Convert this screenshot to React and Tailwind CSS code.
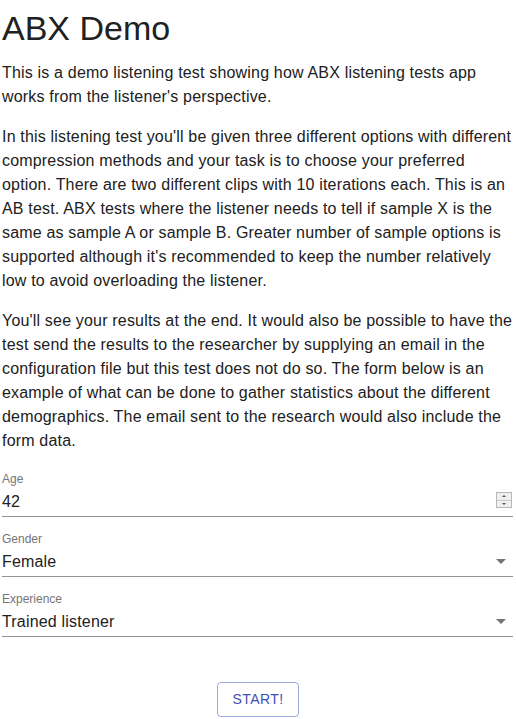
import React, { useState } from 'react';

const Field = ({ label, value, select }) => (
  <div className="relative h-12">
    <div className="h-4 pt-[4px] text-[12px] leading-none text-[#757575]">{label}</div>
    <div className="relative flex h-8 items-center border-b border-[#949494]">
      <span className="pt-[2px] text-base leading-[19px] tracking-[0.18px] text-[#212121]">{value}</span>
      {select ? (
        <svg className="absolute right-0 top-[4px] h-6 w-6 text-[#757575]" viewBox="0 0 24 24" fill="currentColor">
          <path d="M7 10l5 5 5-5z" />
        </svg>
      ) : (
        <div className="absolute right-[1px] top-[7px] flex h-[16px] w-[16px] flex-col border border-[#b8b8b8] bg-[#efefef]">
          <div className="flex flex-1 items-center justify-center border-b border-[#c8c8c8]">
            <span className="h-0 w-0 border-x-[2px] border-b-[2px] border-x-transparent border-b-[#555]" />
          </div>
          <div className="flex flex-1 items-center justify-center">
            <span className="h-0 w-0 border-x-[2px] border-t-[2px] border-x-transparent border-t-[#555]" />
          </div>
        </div>
      )}
    </div>
  </div>
);

const App = () => {
  const [started, setStarted] = useState(false);

  return (
    <div className="min-h-screen bg-white px-[2px] pt-[7px] font-['Liberation_Sans',Arial,sans-serif] text-[#212121]">
      <h4 className="mb-[12px] text-[34px] leading-[42px]">ABX Demo</h4>
      <div className="text-base leading-6 tracking-[0.18px]">
        <p className="mb-4">
          This is a demo listening test showing how ABX listening tests app works from the listener's perspective.
        </p>
        <p className="mb-4">
          In this listening test you'll be given three different options with different compression methods and your task
          is to choose your preferred option. There are two different clips with 10 iterations each. This is an AB test.
          ABX tests where the listener needs to tell if sample X is the same as sample A or sample B. Greater number of
          sample options is supported although it's recommended to keep the number relatively low to avoid overloading the
          listener.
        </p>
        <p className="mb-4">
          You'll see your results at the end. It would also be possible to have the test send the results to the
          researcher by supplying an email in the configuration file but this test does not do so. The form below is an
          example of what can be done to gather statistics about the different demographics. The email sent to the
          research would also include the form data.
        </p>
      </div>

      <div className="flex flex-col gap-3 pr-[1px]">
        <Field label="Age" value="42" />
        <Field label="Gender" value="Female" select />
        <Field label="Experience" value="Trained listener" select />
      </div>

      <div className="flex justify-center pt-[45px]">
        <button
          onClick={() => setStarted(!started)}
          className="h-[35px] min-w-16 rounded border border-[#3f51b5]/50 px-[15px] text-[14px] uppercase tracking-[0.4px] text-[#3f51b5]"
        >
          Start!
        </button>
      </div>
    </div>
  );
};

export default App;
